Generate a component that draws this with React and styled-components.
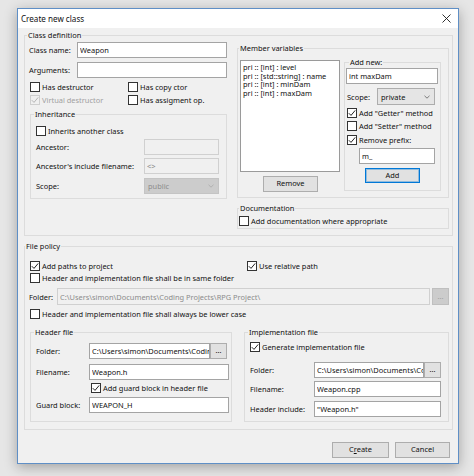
import React from 'react';
import styled, { createGlobalStyle } from 'styled-components';

const GlobalStyle = createGlobalStyle`
  html, body {
    margin: 0;
    padding: 0;
  }
  body {
    background: #e6e6e6;
    font-family: 'Noto Sans', 'Open Sans', sans-serif;
    font-size: 7.45px;
    color: #111;
  }
`;

const Page = styled.div`
  width: 474px;
  height: 476px;
  padding: 8px 0 0 17px;
  box-sizing: border-box;
  background: #e6e6e6;
  overflow: hidden;
`;

const Window = styled.div`
  width: 442px;
  height: 456px;
  box-sizing: border-box;
  border: 1px solid #5f8fc6;
  background: #f0f0f0;
  display: flex;
  flex-direction: column;
  box-shadow: 0 3px 12px rgba(0, 0, 0, 0.3);
`;

const TitleBar = styled.div`
  height: 19px;
  flex: none;
  background: #fff;
  display: flex;
  align-items: center;
  justify-content: space-between;
  padding: 0 7px 0 3px;
  font-size: 8.1px;
`;

const Body = styled.div`
  flex: 1;
  display: flex;
  flex-direction: column;
  padding-left: 6px;
`;

const Group = styled.div`
  box-sizing: border-box;
  width: ${(p) => p.$w}px;
  margin: ${(p) => p.$mt || 0}px 0 0 ${(p) => p.$ml || 0}px;
  padding-bottom: ${(p) => p.$pb || 0}px;
  border: 1px solid #dcdcdc;
  display: flex;
  flex-direction: column;
  align-items: flex-start;
`;

const Caption = styled.div`
  margin: -6px 0 0 ${(p) => p.$ml || 0}px;
  padding: 0 1px;
  height: 10px;
  line-height: 10px;
  background: #f0f0f0;
  white-space: nowrap;
`;

const Columns = styled.div`
  display: flex;
  align-items: ${(p) => p.$stretch ? 'stretch' : 'flex-start'};
  margin-top: ${(p) => p.$mt || 0}px;
`;

const Column = styled.div`
  width: ${(p) => p.$w}px;
  display: flex;
  flex-direction: column;
  align-items: flex-start;
`;

const Row = styled.div`
  display: flex;
  align-items: center;
  height: ${(p) => p.$h || 16}px;
  margin-top: ${(p) => p.$mt || 0}px;
  padding-left: ${(p) => p.$pl || 0}px;
  white-space: nowrap;
`;

const Label = styled.span`
  width: ${(p) => p.$w}px;
  flex: none;
  color: ${(p) => p.$disabled ? '#a0a0a0' : '#111'};
`;

const TextBox = styled.input`
  box-sizing: border-box;
  width: ${(p) => p.$w}px;
  height: ${(p) => p.$h || 16}px;
  margin: ${(p) => p.$mt || 0}px 0 0 ${(p) => p.$ml || 0}px;
  padding: 0 0 0 2px;
  flex: none;
  font: inherit;
  color: #111;
  background: #fff;
  border: 1px solid #a4a4a4;
  outline: none;
  &:disabled {
    background: #f0f0f0;
    border-color: #d0d0d0;
    color: #8c8c8c;
  }
`;

const Box = styled.span`
  width: 10px;
  height: 10px;
  box-sizing: border-box;
  flex: none;
  border: 1px solid ${(p) => p.$disabled ? '#cfcfcf' : '#333'};
  background: ${(p) => p.$disabled ? '#f0f0f0' : '#fff'};
  display: flex;
  align-items: center;
  justify-content: center;
`;

const CheckLabel = styled.label`
  display: flex;
  align-items: center;
  gap: 2px;
  width: ${(p) => p.$w ? `${p.$w}px` : 'auto'};
  flex: none;
  color: ${(p) => p.$disabled ? '#a0a0a0' : '#111'};
`;

const Button = styled.button`
  box-sizing: border-box;
  width: ${(p) => p.$w}px;
  height: ${(p) => p.$h || 16}px;
  margin: ${(p) => p.$mt || 0}px 0 0 ${(p) => p.$ml || 0}px;
  padding: 0;
  flex: none;
  font: inherit;
  line-height: 1;
  color: #111;
  background: #e1e1e1;
  border: 1px solid ${(p) => p.$default ? '#0078d7' : '#adadad'};
  box-shadow: ${(p) => p.$default ? 'inset 0 0 0 1px rgba(0, 120, 215, 0.35)' : 'none'};
  &:disabled {
    background: #cccccc;
    border-color: #bfbfbf;
    color: #a0a0a0;
  }
`;

const SelectBox = styled.div`
  box-sizing: border-box;
  width: ${(p) => p.$w}px;
  height: ${(p) => p.$h || 16}px;
  flex: none;
  display: flex;
  align-items: center;
  justify-content: space-between;
  padding: 0 4px 0 3px;
  background: ${(p) => p.$disabled ? '#cccccc' : '#e5e5e5'};
  border: 1px solid ${(p) => p.$disabled ? '#c4c4c4' : '#adadad'};
  color: ${(p) => p.$disabled ? '#8c8c8c' : '#111'};
`;

const ListBox = styled.div`
  box-sizing: border-box;
  width: 100px;
  height: 112px;
  margin: 7px 0 0 2px;
  padding: 2px 2px;
  background: #fff;
  border: 1px solid #9a9a9a;
  line-height: 8.5px;
  white-space: nowrap;
`;

const ButtonBar = styled.div`
  display: flex;
  justify-content: flex-end;
  gap: 6px;
  margin-top: 12px;
  padding-right: 8px;
`;

const Tick = ({ color = '#222' }) => (
  <svg width="8" height="8" viewBox="0 0 8 8">
    <path d="M0.8 4.2 L3 6.4 L7.2 1.4" fill="none" stroke={color} strokeWidth="1" />
  </svg>
);

const Check = ({ children, checked, disabled, w }) => (
  <CheckLabel $w={w} $disabled={disabled}>
    <Box $disabled={disabled}>{checked && <Tick color={disabled ? '#b4b4b4' : '#222'} />}</Box>
    {children}
  </CheckLabel>
);

const Select = ({ value, w, h, disabled }) => (
  <SelectBox $w={w} $h={h} $disabled={disabled}>
    <span>{value}</span>
    <svg width="6" height="4" viewBox="0 0 6 4">
      <path d="M0.5 0.8 L3 3.2 L5.5 0.8" fill="none" stroke={disabled ? '#a8a8a8' : '#606060'} strokeWidth="0.8" />
    </svg>
  </SelectBox>
);

const CloseIcon = () => (
  <svg width="9" height="9" viewBox="0 0 9 9">
    <path d="M0.5 0.5 L8.5 8.5 M8.5 0.5 L0.5 8.5" stroke="#1a1a1a" strokeWidth="0.9" />
  </svg>
);

const members = [
  'pri :: [int] : level',
  'pri :: [std::string] : name',
  'pri :: [int] : minDam',
  'pri :: [int] : maxDam',
];

export default function App() {
  return (
    <Page>
      <GlobalStyle />
      <Window>
        <TitleBar>
          <span>Create new class</span>
          <CloseIcon />
        </TitleBar>
        <Body>
          <Group $w={429} $mt={7} $pb={6}>
            <Caption $ml={2}>Class definition</Caption>
            <Columns>
              <Column $w={212}>
                <Row $mt={2} $pl={4}>
                  <Label $w={48}>Class name:</Label>
                  <TextBox $w={150} readOnly value="Weapon" />
                </Row>
                <Row $mt={4} $pl={4}>
                  <Label $w={48}>Arguments:</Label>
                  <TextBox $w={150} readOnly value="" />
                </Row>
                <Row $h={10} $mt={4} $pl={5}>
                  <Check w={98}>Has destructor</Check>
                  <Check>Has copy ctor</Check>
                </Row>
                <Row $h={10} $mt={3} $pl={5}>
                  <Check w={98} checked disabled>Virtual destructor</Check>
                  <Check>Has assigment op.</Check>
                </Row>
                <Group $w={197} $mt={9} $ml={5} $pb={4}>
                  <Caption $ml={3}>Inheritance</Caption>
                  <Row $h={10} $mt={7} $pl={5}>
                    <Check>Inherits another class</Check>
                  </Row>
                  <Row $mt={3} $pl={5}>
                    <Label $w={108}>Ancestor:</Label>
                    <TextBox $w={75} disabled value="" />
                  </Row>
                  <Row $mt={3} $pl={5}>
                    <Label $w={108}>Ancestor's include filename:</Label>
                    <TextBox $w={75} disabled value="<>" />
                  </Row>
                  <Row $mt={4} $pl={5}>
                    <Label $w={108}>Scope:</Label>
                    <Select w={75} value="public" disabled />
                  </Row>
                </Group>
              </Column>
              <Column $w={212}>
                <Group $w={212} $mt={8} $pb={5}>
                  <Caption $ml={1}>Member variables</Caption>
                  <Columns>
                    <Column $w={102}>
                      <ListBox>
                        {members.map((m) => <div key={m}>{m}</div>)}
                      </ListBox>
                      <Button $w={55} $mt={4} $ml={25}>Remove</Button>
                    </Column>
                    <Group $w={97} $mt={9} $ml={4} $pb={7}>
                      <Caption $ml={4}>Add new:</Caption>
                      <TextBox $w={92} $mt={1} $ml={1} readOnly value="int maxDam" />
                      <Row $h={17} $mt={4} $pl={2}>
                        <Label $w={30}>Scope:</Label>
                        <Select w={58} h={17} value="private" />
                      </Row>
                      <Row $h={10} $mt={3} $pl={2}>
                        <Check checked>Add "Getter" method</Check>
                      </Row>
                      <Row $h={10} $mt={3} $pl={2}>
                        <Check>Add "Setter" method</Check>
                      </Row>
                      <Row $h={10} $mt={4} $pl={2}>
                        <Check checked>Remove prefix:</Check>
                      </Row>
                      <TextBox $w={76} $mt={3} $ml={14} readOnly value="m_" />
                      <Button $w={55} $h={15} $mt={4} $ml={20} $default>Add</Button>
                    </Group>
                  </Columns>
                </Group>
                <Group $w={212} $mt={10} $pb={2}>
                  <Caption $ml={1}>Documentation</Caption>
                  <Row $h={10} $mt={3} $pl={1}>
                    <Check>Add documentation where appropriate</Check>
                  </Row>
                </Group>
              </Column>
            </Columns>
          </Group>

          <Group $w={429} $mt={10} $pb={7}>
            <Caption>File policy</Caption>
            <Row $h={10} $mt={10} $pl={5}>
              <Check w={217} checked>Add paths to project</Check>
              <Check checked>Use relative path</Check>
            </Row>
            <Row $h={10} $mt={2} $pl={5}>
              <Check>Header and implementation file shall be in same folder</Check>
            </Row>
            <Row $h={17} $mt={5} $pl={4}>
              <Label $w={28}>Folder:</Label>
              <TextBox $w={373} $h={17} disabled value="C:\Users\simon\Documents\Coding Projects\RPG Project\" />
              <Button $w={17} $h={17} $ml={2} disabled>...</Button>
            </Row>
            <Row $h={10} $mt={4} $pl={5}>
              <Check>Header and implementation file shall always be lower case</Check>
            </Row>
            <Columns $mt={13} $stretch>
              <Group $w={202} $ml={5} $pb={8}>
                <Caption $ml={3}>Header file</Caption>
                <Row $mt={6} $pl={5}>
                  <Label $w={53}>Folder:</Label>
                  <TextBox $w={121} readOnly value="C:\Users\simon\Documents\Coding Projects\RPG Project\" />
                  <Button $w={17}>...</Button>
                </Row>
                <Row $mt={5} $pl={5}>
                  <Label $w={53}>Filename:</Label>
                  <TextBox $w={140} readOnly value="Weapon.h" />
                </Row>
                <Row $h={10} $mt={3} $pl={60}>
                  <Check checked>Add guard block in header file</Check>
                </Row>
                <Row $mt={4} $pl={5}>
                  <Label $w={53}>Guard block:</Label>
                  <TextBox $w={140} readOnly value="WEAPON_H" />
                </Row>
              </Group>
              <Group $w={205} $ml={12} $pb={4}>
                <Caption $ml={3}>Implementation file</Caption>
                <Row $h={10} $mt={5} $pl={5}>
                  <Check checked>Generate implementation file</Check>
                </Row>
                <Row $mt={10} $pl={5}>
                  <Label $w={64}>Folder:</Label>
                  <TextBox $w={110} readOnly value="C:\Users\simon\Documents\Coding Projects\RPG Project\" />
                  <Button $w={17}>...</Button>
                </Row>
                <Row $mt={3} $pl={5}>
                  <Label $w={64}>Filename:</Label>
                  <TextBox $w={127} readOnly value="Weapon.cpp" />
                </Row>
                <Row $mt={4} $pl={5}>
                  <Label $w={64}>Header include:</Label>
                  <TextBox $w={127} readOnly value={'"Weapon.h"'} />
                </Row>
              </Group>
            </Columns>
          </Group>

          <ButtonBar>
            <Button $w={57}>C<u>r</u>eate</Button>
            <Button $w={55}>Cancel</Button>
          </ButtonBar>
        </Body>
      </Window>
    </Page>
  );
}
